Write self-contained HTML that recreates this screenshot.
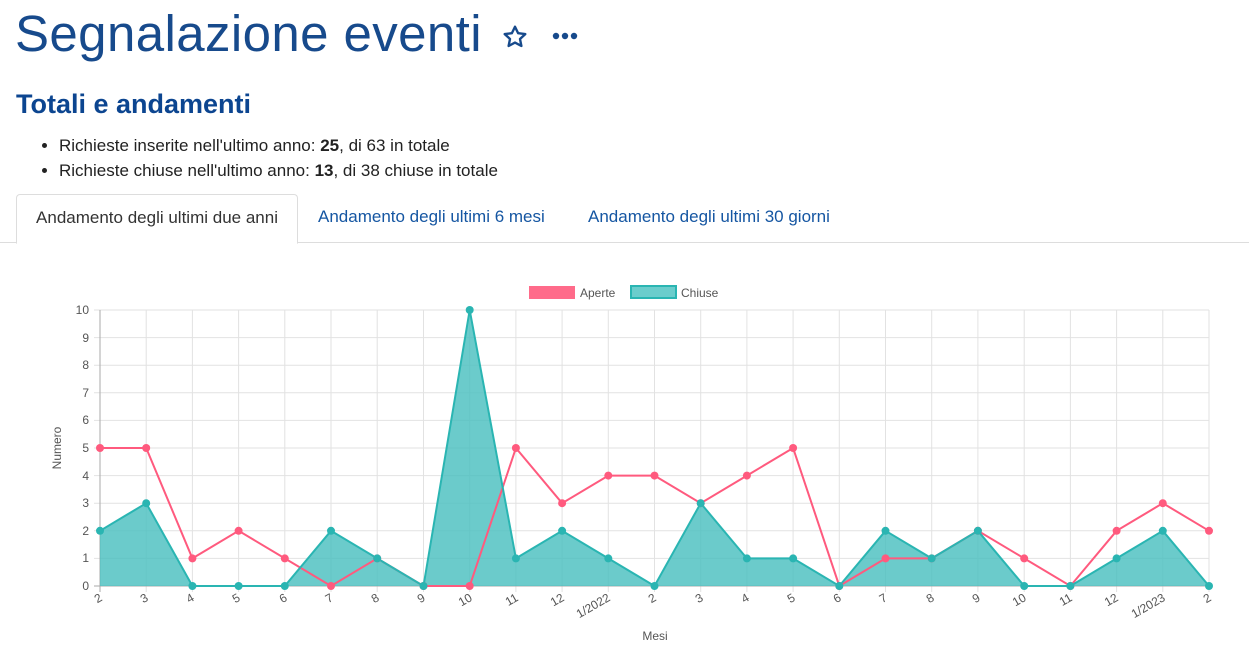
<!DOCTYPE html>
<html><head><meta charset="utf-8"><style>
body{margin:0;width:1249px;height:668px;overflow:hidden;background:#fff;font-family:"Liberation Sans",sans-serif;position:relative}
.t{position:absolute;left:15px;top:4px;font-size:51px;color:#174a8c;font-weight:normal;letter-spacing:0.4px;margin:0}
.h{position:absolute;left:16px;top:89px;font-size:27px;font-weight:bold;color:#0c4590;margin:0}
ul{position:absolute;left:38px;top:133px;margin:0;padding:0 0 0 21px;font-size:17px;color:#222;line-height:25px}
.tabs{position:absolute;left:0;top:194px;width:1249px;height:48px;border-bottom:1px solid #ddd}
.tab{position:absolute;top:0;height:48px;line-height:46px;font-size:17px;color:#1556a2}
.act{left:16px;width:280px;border:1px solid #ddd;border-bottom:1px solid #fff;border-radius:4px 4px 0 0;color:#333;text-align:center;background:#fff}
</style></head><body>
<h1 class="t">Segnalazione eventi</h1>
<svg style="position:absolute;left:501px;top:24px" width="28" height="26" viewBox="0 0 24 24"><path d="M12 2.5l2.9 6 6.6.8-4.9 4.5 1.3 6.5L12 17.1 6.1 20.3l1.3-6.5L2.5 9.3l6.6-.8z" fill="none" stroke="#174a8c" stroke-width="2.2" stroke-linejoin="round"/></svg>
<svg style="position:absolute;left:552px;top:31px" width="26" height="10"><circle cx="4" cy="5" r="3.2" fill="#174a8c"/><circle cx="13" cy="5" r="3.2" fill="#174a8c"/><circle cx="22" cy="5" r="3.2" fill="#174a8c"/></svg>
<h2 class="h">Totali e andamenti</h2>
<ul><li>Richieste inserite nell'ultimo anno: <b>25</b>, di 63 in totale</li><li>Richieste chiuse nell'ultimo anno: <b>13</b>, di 38 chiuse in totale</li></ul>
<div class="tabs">
<div class="tab act">Andamento degli ultimi due anni</div>
<div class="tab" style="left:318px">Andamento degli ultimi 6 mesi</div>
<div class="tab" style="left:588px">Andamento degli ultimi 30 giorni</div>
</div>
<svg style="position:absolute;left:0;top:0" width="1249" height="668" font-family="Liberation Sans, sans-serif" font-size="12" fill="#666">
<rect x="529" y="286" width="46" height="13" fill="#ff6384" opacity=".95"/><text x="580" y="297" fill="#555">Aperte</text>
<rect x="631" y="286" width="45" height="12" fill="#6bcdcc" stroke="#2ab5b2" stroke-width="2"/><text x="681" y="297" fill="#555">Chiuse</text>
<g stroke="#e2e2e2" stroke-width="1">
<line x1="94" y1="310" x2="1209" y2="310"/><line x1="94" y1="337.6" x2="1209" y2="337.6"/><line x1="94" y1="365.2" x2="1209" y2="365.2"/><line x1="94" y1="392.8" x2="1209" y2="392.8"/><line x1="94" y1="420.4" x2="1209" y2="420.4"/><line x1="94" y1="448" x2="1209" y2="448"/><line x1="94" y1="475.6" x2="1209" y2="475.6"/><line x1="94" y1="503.2" x2="1209" y2="503.2"/><line x1="94" y1="530.8" x2="1209" y2="530.8"/><line x1="94" y1="558.4" x2="1209" y2="558.4"/>
<line x1="146.2" y1="310" x2="146.2" y2="592"/><line x1="192.4" y1="310" x2="192.4" y2="592"/><line x1="238.6" y1="310" x2="238.6" y2="592"/><line x1="284.8" y1="310" x2="284.8" y2="592"/><line x1="331" y1="310" x2="331" y2="592"/><line x1="377.2" y1="310" x2="377.2" y2="592"/><line x1="423.5" y1="310" x2="423.5" y2="592"/><line x1="469.7" y1="310" x2="469.7" y2="592"/><line x1="515.9" y1="310" x2="515.9" y2="592"/><line x1="562.1" y1="310" x2="562.1" y2="592"/><line x1="608.3" y1="310" x2="608.3" y2="592"/><line x1="654.5" y1="310" x2="654.5" y2="592"/><line x1="700.7" y1="310" x2="700.7" y2="592"/><line x1="746.9" y1="310" x2="746.9" y2="592"/><line x1="793.1" y1="310" x2="793.1" y2="592"/><line x1="839.3" y1="310" x2="839.3" y2="592"/><line x1="885.5" y1="310" x2="885.5" y2="592"/><line x1="931.7" y1="310" x2="931.7" y2="592"/><line x1="977.9" y1="310" x2="977.9" y2="592"/><line x1="1024.2" y1="310" x2="1024.2" y2="592"/><line x1="1070.4" y1="310" x2="1070.4" y2="592"/><line x1="1116.6" y1="310" x2="1116.6" y2="592"/><line x1="1162.8" y1="310" x2="1162.8" y2="592"/><line x1="1209" y1="310" x2="1209" y2="592"/>
</g>
<line x1="100" y1="310" x2="100" y2="592" stroke="#aaa"/><line x1="94" y1="586" x2="1209" y2="586" stroke="#aaa"/>
<g text-anchor="end" fill="#555"><text x="89" y="314">10</text><text x="89" y="342">9</text><text x="89" y="369">8</text><text x="89" y="397">7</text><text x="89" y="424">6</text><text x="89" y="452">5</text><text x="89" y="480">4</text><text x="89" y="507">3</text><text x="89" y="535">2</text><text x="89" y="562">1</text><text x="89" y="590">0</text></g>
<text transform="translate(61,448) rotate(-90)" text-anchor="middle" fill="#555">Numero</text>
<text x="655" y="640" text-anchor="middle" fill="#555">Mesi</text>
<polygon points="100,586 100,530.8 146.2,503.2 192.4,586 238.6,586 284.8,586 331,530.8 377.2,558.4 423.5,586 469.7,310 515.9,558.4 562.1,530.8 608.3,558.4 654.5,586 700.7,503.2 746.9,558.4 793.1,558.4 839.3,586 885.5,530.8 931.7,558.4 977.9,530.8 1024.2,586 1070.4,586 1116.6,558.4 1162.8,530.8 1209,586" fill="#4bc0c0" fill-opacity=".82"/>
<polyline points="100,448 146.2,448 192.4,558.4 238.6,530.8 284.8,558.4 331,586 377.2,558.4 423.5,586 469.7,586 515.9,448 562.1,503.2 608.3,475.6 654.5,475.6 700.7,503.2 746.9,475.6 793.1,448 839.3,586 885.5,558.4 931.7,558.4 977.9,530.8 1024.2,558.4 1070.4,586 1116.6,530.8 1162.8,503.2 1209,530.8" fill="none" stroke="#ff5a7e" stroke-width="2"/>
<polyline points="100,530.8 146.2,503.2 192.4,586 238.6,586 284.8,586 331,530.8 377.2,558.4 423.5,586 469.7,310 515.9,558.4 562.1,530.8 608.3,558.4 654.5,586 700.7,503.2 746.9,558.4 793.1,558.4 839.3,586 885.5,530.8 931.7,558.4 977.9,530.8 1024.2,586 1070.4,586 1116.6,558.4 1162.8,530.8 1209,586" fill="none" stroke="#2ab5b2" stroke-width="2"/>
<g fill="#ff5a7e"><circle cx="100" cy="448" r="4"/><circle cx="146.2" cy="448" r="4"/><circle cx="192.4" cy="558.4" r="4"/><circle cx="238.6" cy="530.8" r="4"/><circle cx="284.8" cy="558.4" r="4"/><circle cx="331" cy="586" r="4"/><circle cx="377.2" cy="558.4" r="4"/><circle cx="423.5" cy="586" r="4"/><circle cx="469.7" cy="586" r="4"/><circle cx="515.9" cy="448" r="4"/><circle cx="562.1" cy="503.2" r="4"/><circle cx="608.3" cy="475.6" r="4"/><circle cx="654.5" cy="475.6" r="4"/><circle cx="700.7" cy="503.2" r="4"/><circle cx="746.9" cy="475.6" r="4"/><circle cx="793.1" cy="448" r="4"/><circle cx="839.3" cy="586" r="4"/><circle cx="885.5" cy="558.4" r="4"/><circle cx="931.7" cy="558.4" r="4"/><circle cx="977.9" cy="530.8" r="4"/><circle cx="1024.2" cy="558.4" r="4"/><circle cx="1070.4" cy="586" r="4"/><circle cx="1116.6" cy="530.8" r="4"/><circle cx="1162.8" cy="503.2" r="4"/><circle cx="1209" cy="530.8" r="4"/></g>
<g fill="#2ab5b2"><circle cx="100" cy="530.8" r="4"/><circle cx="146.2" cy="503.2" r="4"/><circle cx="192.4" cy="586" r="4"/><circle cx="238.6" cy="586" r="4"/><circle cx="284.8" cy="586" r="4"/><circle cx="331" cy="530.8" r="4"/><circle cx="377.2" cy="558.4" r="4"/><circle cx="423.5" cy="586" r="4"/><circle cx="469.7" cy="310" r="4"/><circle cx="515.9" cy="558.4" r="4"/><circle cx="562.1" cy="530.8" r="4"/><circle cx="608.3" cy="558.4" r="4"/><circle cx="654.5" cy="586" r="4"/><circle cx="700.7" cy="503.2" r="4"/><circle cx="746.9" cy="558.4" r="4"/><circle cx="793.1" cy="558.4" r="4"/><circle cx="839.3" cy="586" r="4"/><circle cx="885.5" cy="530.8" r="4"/><circle cx="931.7" cy="558.4" r="4"/><circle cx="977.9" cy="530.8" r="4"/><circle cx="1024.2" cy="586" r="4"/><circle cx="1070.4" cy="586" r="4"/><circle cx="1116.6" cy="558.4" r="4"/><circle cx="1162.8" cy="530.8" r="4"/><circle cx="1209" cy="586" r="4"/></g>
<g text-anchor="end" fill="#555">
<text transform="translate(103,600) rotate(-30)">2</text><text transform="translate(149,600) rotate(-30)">3</text><text transform="translate(195,600) rotate(-30)">4</text><text transform="translate(241,600) rotate(-30)">5</text><text transform="translate(288,600) rotate(-30)">6</text><text transform="translate(334,600) rotate(-30)">7</text><text transform="translate(380,600) rotate(-30)">8</text><text transform="translate(426,600) rotate(-30)">9</text><text transform="translate(473,600) rotate(-30)">10</text><text transform="translate(519,600) rotate(-30)">11</text><text transform="translate(565,600) rotate(-30)">12</text><text transform="translate(611,600) rotate(-30)">1/2022</text><text transform="translate(657,600) rotate(-30)">2</text><text transform="translate(704,600) rotate(-30)">3</text><text transform="translate(750,600) rotate(-30)">4</text><text transform="translate(796,600) rotate(-30)">5</text><text transform="translate(842,600) rotate(-30)">6</text><text transform="translate(888,600) rotate(-30)">7</text><text transform="translate(935,600) rotate(-30)">8</text><text transform="translate(981,600) rotate(-30)">9</text><text transform="translate(1027,600) rotate(-30)">10</text><text transform="translate(1073,600) rotate(-30)">11</text><text transform="translate(1119,600) rotate(-30)">12</text><text transform="translate(1166,600) rotate(-30)">1/2023</text><text transform="translate(1212,600) rotate(-30)">2</text>
</g>
</svg>
</body></html>
